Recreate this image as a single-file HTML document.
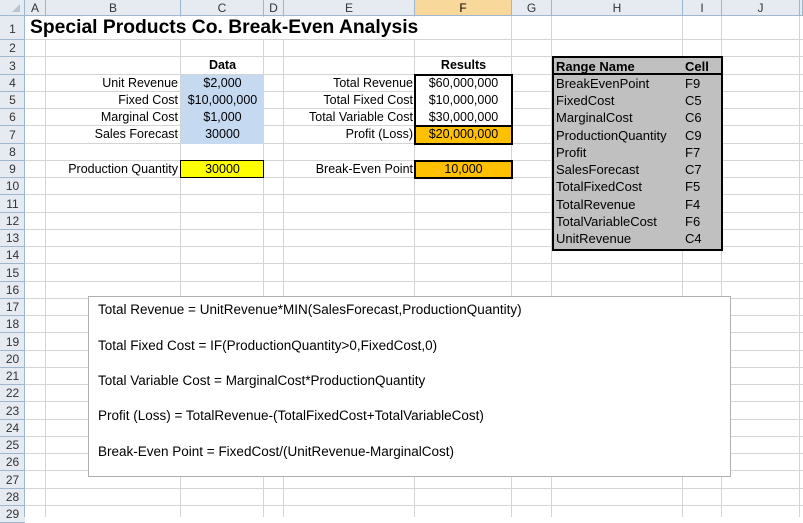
<!DOCTYPE html>
<html><head><meta charset="utf-8"><style>
body{margin:0;width:803px;height:517px;overflow:hidden;background:#fff;font-family:"Liberation Sans",Arial,sans-serif;position:relative}
.a{position:absolute}
.v{position:absolute;top:0;width:1px;height:517px;background:#d4d4d4}
.h{position:absolute;left:0;width:803px;height:1px;background:#d4d4d4}
.ch{position:absolute;top:0;height:16px;line-height:16px;text-align:center;font-size:12px;color:#333;background:#e6ebf2;border-right:1px solid #9eb6ce;box-sizing:border-box}
.rh{position:absolute;left:0;width:25px;text-align:center;font-size:12px;color:#333;background:#e6ebf2;border-bottom:1px solid #9eb6ce;box-sizing:border-box}
.t{position:absolute;font-size:12.5px;line-height:17px;height:17px;white-space:nowrap;color:#000}
.rn .t{font-size:13px}
.r{text-align:right}.cn{text-align:center}.b{font-weight:bold}
.tb{position:absolute;left:88px;top:296px;width:643px;height:181px;border:1px solid #b0b0b0;background:#fff;box-sizing:border-box}
.tb div{position:absolute;left:9px;font-size:13.5px;white-space:nowrap}
</style></head><body>
<div class="v" style="left:45px"></div><div class="v" style="left:180px"></div><div class="v" style="left:263px"></div><div class="v" style="left:283px"></div><div class="v" style="left:414px"></div><div class="v" style="left:511px"></div><div class="v" style="left:551px"></div><div class="v" style="left:682px"></div><div class="v" style="left:721px"></div><div class="v" style="left:799px"></div>
<div class="h" style="top:39px"></div><div class="h" style="top:56px"></div><div class="h" style="top:74px"></div><div class="h" style="top:91px"></div><div class="h" style="top:108px"></div><div class="h" style="top:125px"></div><div class="h" style="top:143px"></div><div class="h" style="top:160px"></div><div class="h" style="top:177px"></div><div class="h" style="top:194px"></div><div class="h" style="top:212px"></div><div class="h" style="top:229px"></div><div class="h" style="top:246px"></div><div class="h" style="top:263px"></div><div class="h" style="top:281px"></div><div class="h" style="top:298px"></div><div class="h" style="top:315px"></div><div class="h" style="top:332px"></div><div class="h" style="top:350px"></div><div class="h" style="top:367px"></div><div class="h" style="top:384px"></div><div class="h" style="top:401px"></div><div class="h" style="top:419px"></div><div class="h" style="top:436px"></div><div class="h" style="top:453px"></div><div class="h" style="top:470px"></div><div class="h" style="top:488px"></div><div class="h" style="top:505px"></div>
<div class="ch" style="left:0;width:25px"></div>
<div class="a" style="left:12px;top:4px;width:0;height:0;border-left:8px solid transparent;border-bottom:8px solid #b8c4d2"></div>
<div class="ch" style="left:25px;width:21px">A</div><div class="ch" style="left:46px;width:135px">B</div><div class="ch" style="left:181px;width:83px">C</div><div class="ch" style="left:264px;width:20px">D</div><div class="ch" style="left:284px;width:131px">E</div><div class="ch" style="left:415px;width:97px;background:#f9d99b;color:#000">F</div><div class="ch" style="left:512px;width:40px">G</div><div class="ch" style="left:552px;width:131px">H</div><div class="ch" style="left:683px;width:39px">I</div><div class="ch" style="left:722px;width:78px">J</div><div class="ch" style="left:800px;width:3px"></div>
<div class="a" style="left:0;top:15px;width:803px;height:1px;background:#9eb6ce"></div>
<div class="rh" style="top:16px;height:24px;line-height:26px">1</div>
<div class="rh" style="top:40px;height:17px;line-height:17px">2</div>
<div class="rh" style="top:57px;height:18px;line-height:18px">3</div>
<div class="rh" style="top:75px;height:17px;line-height:17px">4</div>
<div class="rh" style="top:92px;height:17px;line-height:17px">5</div>
<div class="rh" style="top:109px;height:17px;line-height:17px">6</div>
<div class="rh" style="top:126px;height:18px;line-height:18px">7</div>
<div class="rh" style="top:144px;height:17px;line-height:17px">8</div>
<div class="rh" style="top:161px;height:17px;line-height:17px">9</div>
<div class="rh" style="top:178px;height:17px;line-height:17px">10</div>
<div class="rh" style="top:195px;height:18px;line-height:18px">11</div>
<div class="rh" style="top:213px;height:17px;line-height:17px">12</div>
<div class="rh" style="top:230px;height:17px;line-height:17px">13</div>
<div class="rh" style="top:247px;height:17px;line-height:17px">14</div>
<div class="rh" style="top:264px;height:18px;line-height:18px">15</div>
<div class="rh" style="top:282px;height:17px;line-height:17px">16</div>
<div class="rh" style="top:299px;height:17px;line-height:17px">17</div>
<div class="rh" style="top:316px;height:17px;line-height:17px">18</div>
<div class="rh" style="top:333px;height:18px;line-height:18px">19</div>
<div class="rh" style="top:351px;height:17px;line-height:17px">20</div>
<div class="rh" style="top:368px;height:17px;line-height:17px">21</div>
<div class="rh" style="top:385px;height:17px;line-height:17px">22</div>
<div class="rh" style="top:402px;height:18px;line-height:18px">23</div>
<div class="rh" style="top:420px;height:17px;line-height:17px">24</div>
<div class="rh" style="top:437px;height:17px;line-height:17px">25</div>
<div class="rh" style="top:454px;height:17px;line-height:17px">26</div>
<div class="rh" style="top:471px;height:18px;line-height:18px">27</div>
<div class="rh" style="top:489px;height:17px;line-height:17px">28</div>
<div class="rh" style="top:506px;height:17px;line-height:17px">29</div>
<div class="a" style="left:24px;top:0;width:1px;height:517px;background:#9eb6ce"></div>
<div class="t b" style="left:30px;top:17px;height:22px;line-height:22px;font-size:19.3px;background:#fff">Special Products Co. Break-Even Analysis</div>
<div class="a" style="left:181px;top:75px;width:83px;height:69px;background:#c5d9f1"></div>
<div class="a" style="left:180px;top:160px;width:84px;height:18px;background:#ffff00;border:1px solid #000;box-sizing:border-box"></div>
<div class="a" style="left:414px;top:74px;width:99px;height:71px;border:2px solid #000;box-sizing:border-box;background:#fff"></div>
<div class="a" style="left:416px;top:127px;width:95px;height:16px;background:#ffc000"></div>
<div class="a" style="left:414px;top:125px;width:99px;height:2px;background:#000"></div>
<div class="a" style="left:414px;top:160px;width:99px;height:19px;border:2px solid #000;box-sizing:border-box;background:#ffc000"></div>
<div class="a" style="left:552px;top:56px;width:171px;height:195px;border:2px solid #000;box-sizing:border-box;background:#c0c0c0"></div>
<div class="a" style="left:552px;top:73px;width:171px;height:2px;background:#000"></div>
<div class="t b cn" style="left:181px;top:57px;width:83px">Data</div>
<div class="t r" style="left:46px;top:75px;width:132px">Unit Revenue</div>
<div class="t r" style="left:46px;top:92px;width:132px">Fixed Cost</div>
<div class="t r" style="left:46px;top:109px;width:132px">Marginal Cost</div>
<div class="t r" style="left:46px;top:126px;width:132px">Sales Forecast</div>
<div class="t r" style="left:46px;top:161px;width:132px">Production Quantity</div>
<div class="t cn" style="left:181px;top:75px;width:83px">$2,000</div>
<div class="t cn" style="left:181px;top:92px;width:83px">$10,000,000</div>
<div class="t cn" style="left:181px;top:109px;width:83px">$1,000</div>
<div class="t cn" style="left:181px;top:126px;width:83px">30000</div>
<div class="t cn" style="left:181px;top:161px;width:83px">30000</div>
<div class="t b cn" style="left:415px;top:57px;width:97px">Results</div>
<div class="t r" style="left:284px;top:75px;width:129px">Total Revenue</div>
<div class="t r" style="left:284px;top:92px;width:129px">Total Fixed Cost</div>
<div class="t r" style="left:284px;top:109px;width:129px">Total Variable Cost</div>
<div class="t r" style="left:284px;top:126px;width:129px">Profit (Loss)</div>
<div class="t r" style="left:284px;top:161px;width:129px">Break-Even Point</div>
<div class="t cn" style="left:415px;top:75px;width:97px">$60,000,000</div>
<div class="t cn" style="left:415px;top:92px;width:97px">$10,000,000</div>
<div class="t cn" style="left:415px;top:109px;width:97px">$30,000,000</div>
<div class="t cn" style="left:415px;top:126px;width:97px">$20,000,000</div>
<div class="t cn" style="left:415px;top:161px;width:97px">10,000</div>
<div class="rn">
<div class="t b" style="left:556px;top:58px">Range Name</div><div class="t b" style="left:685px;top:58px">Cell</div>
<div class="t" style="left:556px;top:75px">BreakEvenPoint</div><div class="t" style="left:685px;top:75px">F9</div>
<div class="t" style="left:556px;top:92px">FixedCost</div><div class="t" style="left:685px;top:92px">C5</div>
<div class="t" style="left:556px;top:109px">MarginalCost</div><div class="t" style="left:685px;top:109px">C6</div>
<div class="t" style="left:556px;top:127px">ProductionQuantity</div><div class="t" style="left:685px;top:127px">C9</div>
<div class="t" style="left:556px;top:144px">Profit</div><div class="t" style="left:685px;top:144px">F7</div>
<div class="t" style="left:556px;top:161px">SalesForecast</div><div class="t" style="left:685px;top:161px">C7</div>
<div class="t" style="left:556px;top:178px">TotalFixedCost</div><div class="t" style="left:685px;top:178px">F5</div>
<div class="t" style="left:556px;top:196px">TotalRevenue</div><div class="t" style="left:685px;top:196px">F4</div>
<div class="t" style="left:556px;top:213px">TotalVariableCost</div><div class="t" style="left:685px;top:213px">F6</div>
<div class="t" style="left:556px;top:230px">UnitRevenue</div><div class="t" style="left:685px;top:230px">C4</div>
</div>
<div class="tb">
<div style="top:5px">Total Revenue = UnitRevenue*MIN(SalesForecast,ProductionQuantity)</div>
<div style="top:41px">Total Fixed Cost = IF(ProductionQuantity&gt;0,FixedCost,0)</div>
<div style="top:76px">Total Variable Cost = MarginalCost*ProductionQuantity</div>
<div style="top:111px">Profit (Loss) = TotalRevenue-(TotalFixedCost+TotalVariableCost)</div>
<div style="top:147px">Break-Even Point = FixedCost/(UnitRevenue-MarginalCost)</div>
</div>
</body></html>
